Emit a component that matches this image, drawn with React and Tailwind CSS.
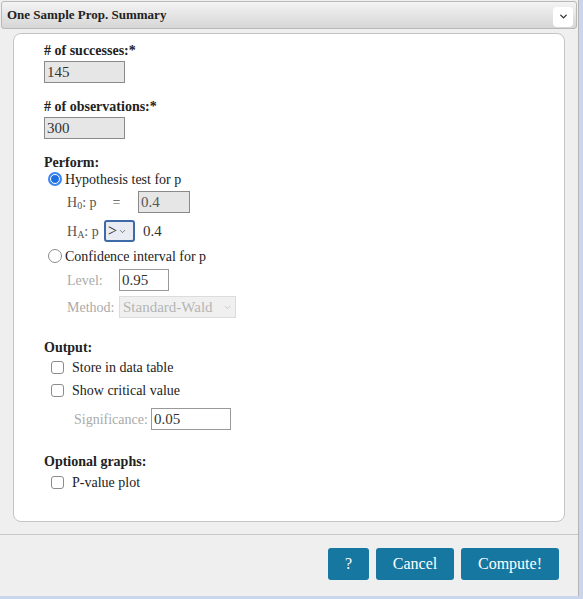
import { ChevronDown } from 'lucide-react';

const serif = { fontFamily: '"Liberation Serif", "Times New Roman", serif' };

function Field({ label, value, className = 'w-[81px]' }) {
  return (
    <div>
      <div className="font-bold text-[14px] leading-[16px] text-[#222]">{label}</div>
      <div className={`${className} h-[22px] mt-[2px] bg-[#e6e6e6] border border-[#8a8a8a] px-[2px] text-[15px] leading-[20px] text-[#333]`}>
        {value}
      </div>
    </div>
  );
}

function Check({ label }) {
  return (
    <div className="flex items-center gap-[8px] h-[23px] pl-[7px]">
      <span className="w-[13px] h-[13px] rounded-[3px] border border-[#8c8c8c] bg-white" />
      <span className="text-[14px] text-[#222]">{label}</span>
    </div>
  );
}

export default function App() {
  return (
    <div className="w-[583px] h-[599px] bg-[#c9d6ee] overflow-hidden" style={serif}>
      <div className="w-[579px] h-[596px] bg-[#efefef] border-r border-[#b5b5b5] flex flex-col">
        <div className="h-[28px] mx-[1px] mt-[1px] rounded-[3px] border border-[#b9b9b9] bg-gradient-to-b from-[#f4f4f4] to-[#d6d6d6] flex items-center justify-between pl-[5px] pr-[3px]">
          <span className="font-bold text-[13px] text-[#222]">One Sample Prop. Summary</span>
          <span className="w-[20px] h-[20px] bg-white rounded-[4px] flex items-center justify-center mt-[3px]">
            <ChevronDown size={11} strokeWidth={3} className="text-[#333]" />
          </span>
        </div>

        <div className="mx-[13px] mt-[4px] h-[489px] bg-white border border-[#c4c4c4] rounded-[8px] pl-[30px] pt-[9px]">
          <Field label="# of successes:*" value="145" />
          <div className="mt-[16px]">
            <Field label="# of observations:*" value="300" />
          </div>

          <div className="mt-[16px] font-bold text-[14px] leading-[16px] text-[#222]">Perform:</div>
          <div className="flex items-center gap-[3px] pl-[4px] h-[16px]">
            <span className="w-[14px] h-[14px] rounded-full bg-[#3a86f4] p-[2px]">
              <span className="block w-full h-full rounded-full border-[1.5px] border-white bg-[#1f6fe3]" />
            </span>
            <span className="text-[14px] text-[#222]">Hypothesis test for p</span>
          </div>
          <div className="flex items-center pl-[23px] mt-[4px] h-[22px]">
            <span className="text-[14px] text-[#555] w-[71px] whitespace-nowrap">
              H<sub className="text-[10px]">0</sub>: p<span className="ml-[16px]">=</span>
            </span>
            <span className="w-[52px] h-[22px] bg-[#e6e6e6] border border-[#8a8a8a] px-[2px] text-[15px] leading-[20px] text-[#555]">0.4</span>
          </div>
          <div className="flex items-center pl-[23px] mt-[7px] h-[22px]">
            <span className="text-[14px] text-[#555] w-[37px] whitespace-nowrap">
              H<sub className="text-[10px]">A</sub>: p
            </span>
            <span className="w-[31px] h-[22px] border-2 border-[#3f6aa8] rounded-[3px] bg-[#e9edf3] flex items-center pl-[2px] gap-[1px]">
              <span className="text-[16px] text-[#222] leading-none">&gt;</span>
              <ChevronDown size={9} strokeWidth={2} className="text-[#555]" />
            </span>
            <span className="ml-[8px] text-[15px] text-[#333]">0.4</span>
          </div>
          <div className="flex items-center gap-[3px] pl-[4px] mt-[4px] h-[20px]">
            <span className="w-[14px] h-[14px] rounded-full border border-[#8c8c8c] bg-white" />
            <span className="text-[14px] text-[#222]">Confidence interval for p</span>
          </div>
          <div className="flex items-center pl-[23px] mt-[3px] h-[22px]">
            <span className="text-[14px] text-[#aaa] w-[52px]">Level:</span>
            <span className="w-[50px] h-[22px] bg-white border border-[#999] px-[2px] text-[15px] leading-[20px] text-[#333]">0.95</span>
          </div>
          <div className="flex items-center pl-[23px] mt-[5px] h-[22px]">
            <span className="text-[14px] text-[#aaa] w-[52px]">Method:</span>
            <span className="w-[117px] h-[22px] bg-[#f0f0f0] border border-[#dcdcdc] flex items-center justify-between pl-[3px] pr-[3px] text-[15px] text-[#b5b5b5]">
              Standard-Wald
              <ChevronDown size={9} strokeWidth={2} className="text-[#bbb]" />
            </span>
          </div>

          <div className="mt-[22px] font-bold text-[14px] leading-[16px] text-[#222]">Output:</div>
          <div>
            <Check label="Store in data table" />
            <Check label="Show critical value" />
          </div>
          <div className="flex items-center pl-[30px] mt-[6px] h-[22px]">
            <span className="text-[14px] text-[#aaa] w-[77px]">Significance:</span>
            <span className="w-[80px] h-[22px] bg-white border border-[#999] px-[2px] text-[15px] leading-[20px] text-[#333]">0.05</span>
          </div>

          <div className="mt-[24px] font-bold text-[14px] leading-[16px] text-[#222]">Optional graphs:</div>
          <div className="mt-[1px]">
            <Check label="P-value plot" />
          </div>
        </div>

        <div className="mt-[12px] border-t border-[#c8c8c8]" />
        <div className="flex justify-end gap-[7px] pr-[19px] mt-[13px]">
          <button className="w-[41px] h-[32px] bg-[#1678a0] rounded-[3px] text-white text-[16px]">?</button>
          <button className="w-[78px] h-[32px] bg-[#1678a0] rounded-[3px] text-white text-[16px]">Cancel</button>
          <button className="w-[98px] h-[32px] bg-[#1678a0] rounded-[3px] text-white text-[16px]">Compute!</button>
        </div>
      </div>
    </div>
  );
}
